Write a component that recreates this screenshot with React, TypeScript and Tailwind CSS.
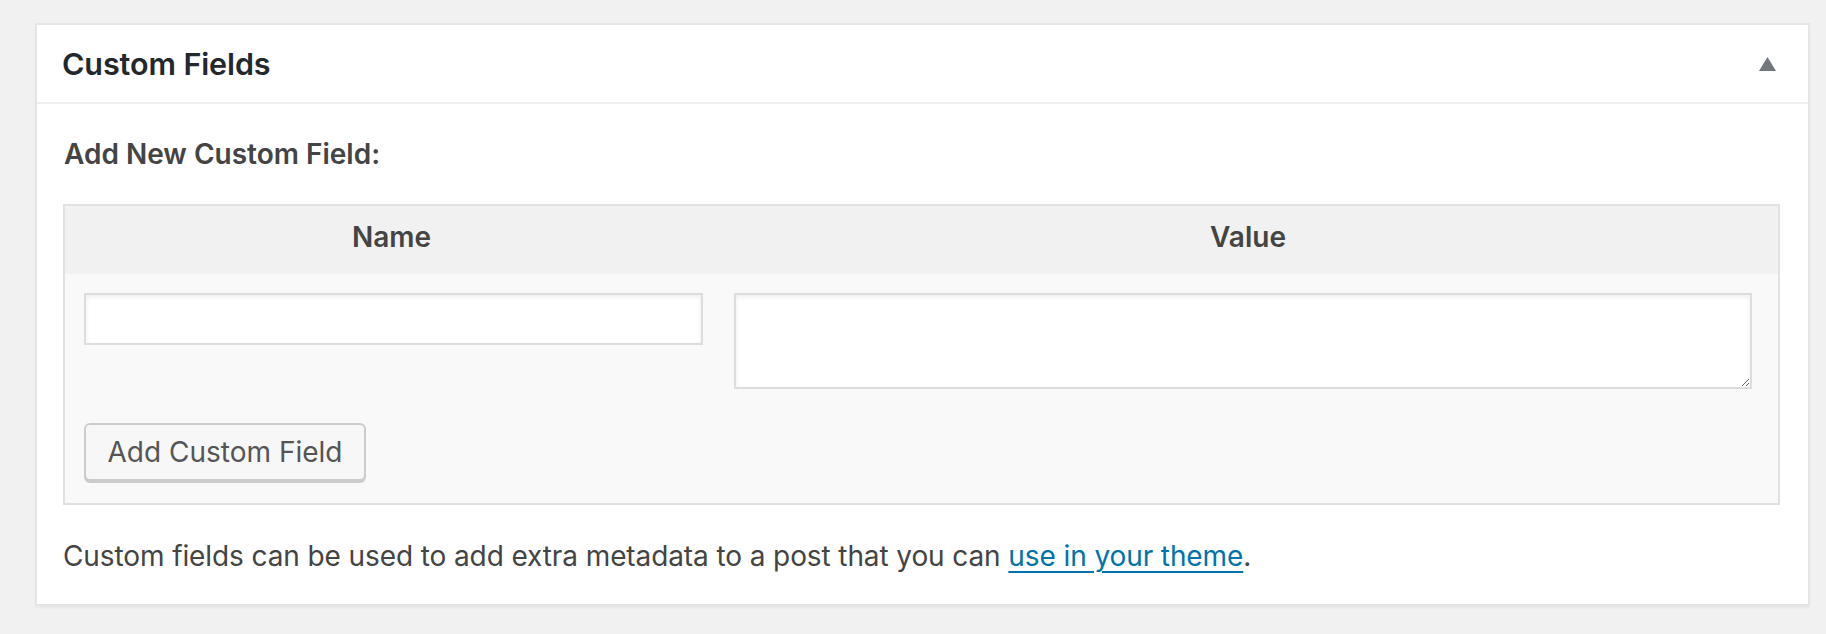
export default function App() {
  return (
    <div className="h-[634px] bg-[#f1f1f1] pl-[35px] pr-[16px] pt-[23px] font-['Inter','Liberation_Sans',sans-serif]">
      <section className="border-2 border-[#e5e5e5] bg-white shadow-[0_2px_2px_rgba(0,0,0,0.04)]">
        <div className="flex h-[79px] items-center justify-between border-b-2 border-[#eeeeee] pl-[25px] pr-[32px]">
          <h2 className="text-[30.5px] font-semibold leading-[40px] tracking-[-0.1px] text-[#23282d]">Custom Fields</h2>
          <svg width="17" height="14" viewBox="0 0 17 14" aria-hidden="true">
            <polygon points="8.5,0 17,14 0,14" fill="#72777c" />
          </svg>
        </div>

        <div className="pb-[28px] pl-[26px] pr-[28px] pt-[30px]">
          <p className="pl-[1px] text-[28px] font-semibold leading-[40px] text-[#444444]">
            Add New Custom Field:
          </p>

          <div className="mt-[30px] border-2 border-[#e1e1e1]">
            <div className="flex h-[68px] items-center bg-[#f1f1f1] pb-[6px] text-[28px] font-semibold text-[#444444]">
              <div className="w-[653px] text-center">Name</div>
              <div className="flex-1 text-center">Value</div>
            </div>

            <div className="bg-[#f9f9f9] pb-[22px] pt-[19px]">
              <div className="flex items-start">
                <div className="w-[653px] pl-[19px] pr-[15px]">
                  <input
                    type="text"
                    className="block h-[52px] w-full border-2 border-[#dddddd] bg-white shadow-[inset_0_2px_4px_rgba(0,0,0,0.07)] outline-none"
                  />
                </div>
                <div className="flex-1 pl-[16px] pr-[26px]">
                  <textarea className="block h-[96px] w-full border-2 border-[#dddddd] bg-white shadow-[inset_0_2px_4px_rgba(0,0,0,0.07)] outline-none" />
                </div>
              </div>

              <div className="mt-[34px] pl-[19px]">
                <button className="h-[58px] w-[282px] rounded-[6px] border-2 border-[#cccccc] bg-[#f7f7f7] text-[28px] leading-[40px] text-[#555555] shadow-[0_2px_0_#cccccc]">
                  Add Custom Field
                </button>
              </div>
            </div>
          </div>

          <p className="mt-[31px] text-[28px] leading-[40px] tracking-[-0.1px] text-[#444444]">
            Custom fields can be used to add extra metadata to a post that you can{" "}
            <a href="#" className="text-[#0073aa] underline decoration-2 underline-offset-[5px]">
              use in your theme
            </a>
            .
          </p>
        </div>
      </section>
    </div>
  );
}
